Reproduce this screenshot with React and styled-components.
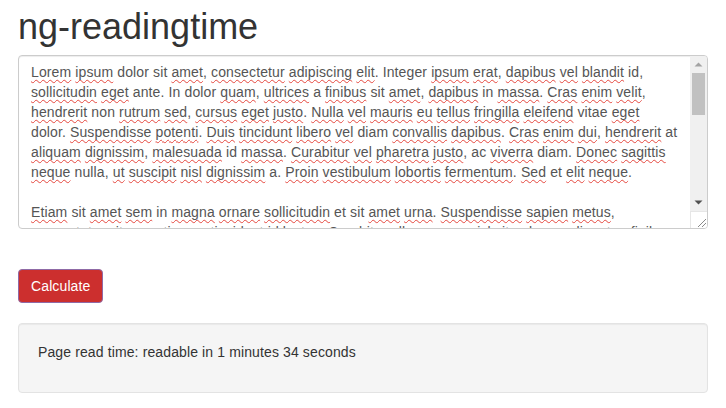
import React from 'react';
import styled, { createGlobalStyle } from 'styled-components';

const GlobalStyle = createGlobalStyle`
  html, body {
    margin: 0;
    padding: 0;
    overflow: hidden;
    background: #fff;
  }
  body {
    font-family: "Liberation Sans", Arial, Helvetica, sans-serif;
    font-size: 14px;
    line-height: 1.42857;
    letter-spacing: 0.12px;
    color: #333;
  }
`;

const Page = styled.div`
  padding: 7px 18px 0;
`;

const Title = styled.h1`
  margin: 0 0 8px;
  font-size: 36px;
  font-weight: 500;
  line-height: 1.1;
  letter-spacing: 0;
  color: #333;
`;

const Field = styled.div`
  position: relative;
  box-sizing: border-box;
  height: 174px;
  border: 1px solid #ccc;
  border-radius: 4px;
  box-shadow: inset 0 1px 1px rgba(0, 0, 0, 0.075);
  overflow: hidden;
`;

const TextBox = styled.div`
  box-sizing: border-box;
  height: 100%;
  padding: 6px 20px 6px 12px;
  color: #555;
  font-size: 14px;
  line-height: 20px;
  overflow: hidden;
  white-space: pre;
`;

const Misspelled = styled.span`
  text-decoration: underline wavy #e5483f;
  text-decoration-thickness: 1px;
  text-underline-offset: 2px;
  text-decoration-skip-ink: none;
`;

const ScrollBar = styled.div`
  position: absolute;
  top: 0;
  right: 0;
  bottom: 17px;
  width: 17px;
  display: flex;
  flex-direction: column;
  background: #f0f0f0;
`;

const ArrowButton = styled.div`
  height: 17px;
  display: flex;
  align-items: center;
  justify-content: center;
  flex: none;
`;

const Track = styled.div`
  flex: 1;
  padding: 0 2px;
`;

const Thumb = styled.div`
  height: 42px;
  background: #c1c1c1;
`;

const Resizer = styled.div`
  position: absolute;
  right: 0;
  bottom: 0;
  width: 16px;
  height: 16px;
  border-left: 1px solid #e6e6e6;
  border-top: 1px solid #e6e6e6;
  background: #fff;
  display: flex;
  align-items: flex-end;
  justify-content: flex-end;
`;

const Actions = styled.div`
  margin-top: 40px;
`;

const Button = styled.button`
  height: 34px;
  padding: 6px 12px;
  font-family: inherit;
  font-size: 14px;
  line-height: 20px;
  letter-spacing: inherit;
  color: #fff;
  background: #cc2f2e;
  border: 1px solid #8f6aa6;
  border-radius: 4px;
  cursor: pointer;
`;

const Well = styled.div`
  margin-top: 20px;
  padding: 19px;
  background: #f5f5f5;
  border: 1px solid #e3e3e3;
  border-radius: 4px;
  box-shadow: inset 0 1px 1px rgba(0, 0, 0, 0.05);
`;

const Result = styled.p`
  margin: 0 0 10px;
`;

const correct = new Set([
  'dolor', 'sit', 'Integer', 'id', 'ante', 'In', 'a', 'in', 'non',
  'vitae', 'diam', 'at', 'ac', 'nulla', 'et',
]);

const lines = [
  'Lorem ipsum dolor sit amet, consectetur adipiscing elit. Integer ipsum erat, dapibus vel blandit id,',
  'sollicitudin eget ante. In dolor quam, ultrices a finibus sit amet, dapibus in massa. Cras enim velit,',
  'hendrerit non rutrum sed, cursus eget justo. Nulla vel mauris eu tellus fringilla eleifend vitae eget',
  'dolor. Suspendisse potenti. Duis tincidunt libero vel diam convallis dapibus. Cras enim dui, hendrerit at',
  'aliquam dignissim, malesuada id massa. Curabitur vel pharetra justo, ac viverra diam. Donec sagittis',
  'neque nulla, ut suscipit nisl dignissim a. Proin vestibulum lobortis fermentum. Sed et elit neque.',
  '',
  'Etiam sit amet sem in magna ornare sollicitudin et sit amet urna. Suspendisse sapien metus,',
  'consectetur vitae pretium a, tincidunt id lectus. Curabitur ullamcorper nisl vitae lorem aliquet, a finibus',
  'neque malesuada. Vivamus non tempus augue. Pellentesque habitant morbi tristique senectus et netus.',
];

const renderText = (text) =>
  text.split(/(\s+)/).map((token, i) => {
    const word = token.replace(/[.,;]/g, '');
    if (!word.trim() || correct.has(word)) return token;
    const trail = token.slice(word.length);
    return (
      <React.Fragment key={i}>
        <Misspelled>{word}</Misspelled>
        {trail}
      </React.Fragment>
    );
  });

const App = () => {
  return (
    <Page>
      <GlobalStyle />
      <Title>ng-readingtime</Title>
      <Field>
        <TextBox role="textbox" aria-multiline="true">
          {lines.map((line, i) => (
            <React.Fragment key={i}>
              {i > 0 && '\n'}
              {renderText(line)}
            </React.Fragment>
          ))}
        </TextBox>
        <ScrollBar>
          <ArrowButton>
            <svg width="9" height="5" viewBox="0 0 9 5">
              <path d="M0.5 4.5 L4.5 0.5 L8.5 4.5 Z" fill="#a3a3a3" />
            </svg>
          </ArrowButton>
          <Track>
            <Thumb />
          </Track>
          <ArrowButton>
            <svg width="9" height="5" viewBox="0 0 9 5">
              <path d="M0.5 0.5 L4.5 4.5 L8.5 0.5 Z" fill="#505050" />
            </svg>
          </ArrowButton>
        </ScrollBar>
        <Resizer>
          <svg width="11" height="11" viewBox="0 0 11 11">
            <path d="M2 10 L10 2 M6 10 L10 6" stroke="#8a8a8a" strokeWidth="1" />
          </svg>
        </Resizer>
      </Field>
      <Actions>
        <Button>Calculate</Button>
      </Actions>
      <Well>
        <Result>Page read time: readable in 1 minutes 34 seconds</Result>
      </Well>
    </Page>
  );
};

export default App;
